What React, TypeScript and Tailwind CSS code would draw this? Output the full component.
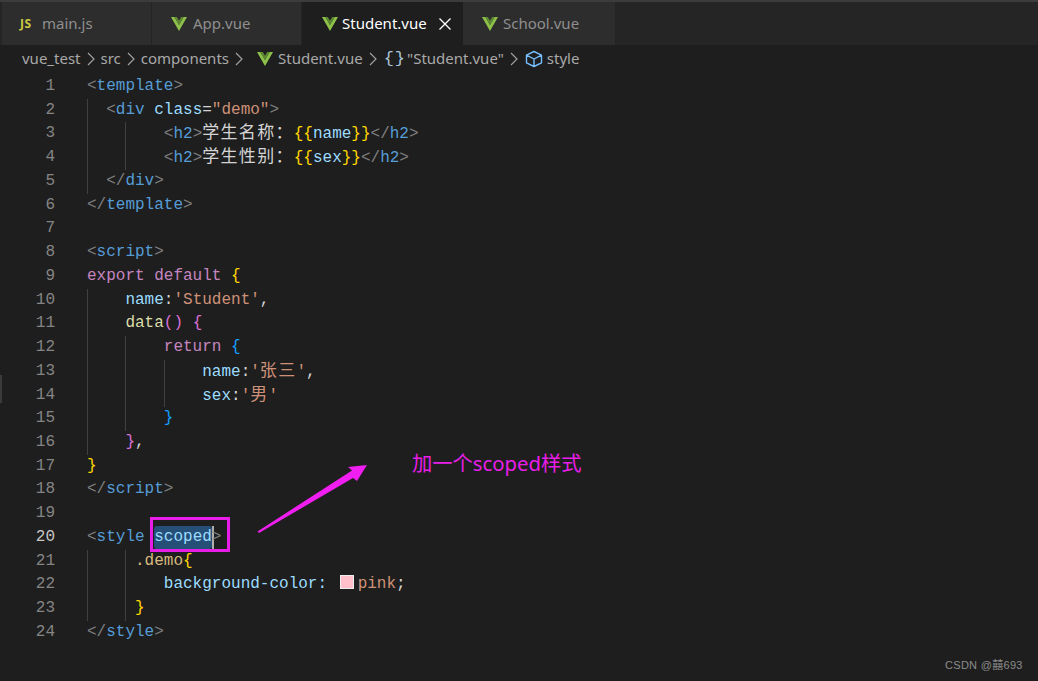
import React from "react";

const T = ({ c, children }: { c: string; children: React.ReactNode }) => <span className={c}>{children}</span>;
const G = "text-[#808080]";
const B = "text-[#569cd6]";
const A = "text-[#9cdcfe]";
const S = "text-[#ce9178]";
const K = "text-[#c586c0]";
const Y = "text-[#ffd700]";
const P = "text-[#da70d6]";
const L = "text-[#179fff]";
const W = "text-[#d4d4d4]";
const Cjk = ({ c, children }: { c: string; children: React.ReactNode }) => (
  <span className={`${c} text-[17px] leading-none tracking-[1.3px] [font-family:'Noto_Sans_CJK_SC',sans-serif]`}>{children}</span>
);

const sp = (n: number) => " ".repeat(n);

const lines: { g: number[]; n: React.ReactNode }[] = [
  { g: [], n: <><T c={G}>&lt;</T><T c={B}>template</T><T c={G}>&gt;</T></> },
  { g: [0], n: <>{sp(2)}<T c={G}>&lt;</T><T c={B}>div</T> <T c={A}>class</T><T c={W}>=</T><T c={S}>"demo"</T><T c={G}>&gt;</T></> },
  { g: [0, 1], n: <>{sp(8)}<T c={G}>&lt;</T><T c={B}>h2</T><T c={G}>&gt;</T><Cjk c={W}>学生名称：</Cjk><T c={Y}>{"{{"}</T><T c={A}>name</T><T c={Y}>{"}}"}</T><T c={G}>&lt;/</T><T c={B}>h2</T><T c={G}>&gt;</T></> },
  { g: [0, 1], n: <>{sp(8)}<T c={G}>&lt;</T><T c={B}>h2</T><T c={G}>&gt;</T><Cjk c={W}>学生性别：</Cjk><T c={Y}>{"{{"}</T><T c={A}>sex</T><T c={Y}>{"}}"}</T><T c={G}>&lt;/</T><T c={B}>h2</T><T c={G}>&gt;</T></> },
  { g: [0], n: <>{sp(2)}<T c={G}>&lt;/</T><T c={B}>div</T><T c={G}>&gt;</T></> },
  { g: [], n: <><T c={G}>&lt;/</T><T c={B}>template</T><T c={G}>&gt;</T></> },
  { g: [], n: null },
  { g: [], n: <><T c={G}>&lt;</T><T c={B}>script</T><T c={G}>&gt;</T></> },
  { g: [], n: <><T c={K}>export default</T> <T c={Y}>{"{"}</T></> },
  { g: [0], n: <>{sp(4)}<T c={A}>name</T><T c={W}>:</T><T c={S}>'Student'</T><T c={W}>,</T></> },
  { g: [0], n: <>{sp(4)}<T c="text-[#dcdcaa]">data</T><T c={P}>()</T> <T c={P}>{"{"}</T></> },
  { g: [0, 1], n: <>{sp(8)}<T c={K}>return</T> <T c={L}>{"{"}</T></> },
  { g: [0, 1, 2], n: <>{sp(12)}<T c={A}>name</T><T c={W}>:</T><T c={S}>'</T><Cjk c={S}>张三</Cjk><T c={S}>'</T><T c={W}>,</T></> },
  { g: [0, 1, 2], n: <>{sp(12)}<T c={A}>sex</T><T c={W}>:</T><T c={S}>'</T><Cjk c={S}>男</Cjk><T c={S}>'</T></> },
  { g: [0, 1], n: <>{sp(8)}<T c={L}>{"}"}</T></> },
  { g: [0], n: <>{sp(4)}<T c={P}>{"}"}</T><T c={W}>,</T></> },
  { g: [], n: <T c={Y}>{"}"}</T> },
  { g: [], n: <><T c={G}>&lt;/</T><T c={B}>script</T><T c={G}>&gt;</T></> },
  { g: [], n: null },
  {
    g: [],
    n: (
      <>
        <T c={G}>&lt;</T><T c={B}>style</T>{" "}
        <span className="inline-block h-[23px] leading-[23px] text-[#9cdcfe] bg-[#264f78] rounded-[3px] align-top">scoped</span>
        <span className="inline-block w-[2px] h-[23px] -mr-[2px] align-top bg-[#aeafad]" />
        <T c={G}>&gt;</T>
      </>
    ),
  },
  { g: [0, 1], n: <>{sp(5)}<T c="text-[#d7ba7d]">.demo</T><T c={Y}>{"{"}</T></> },
  {
    g: [0, 1],
    n: (
      <>
        {sp(8)}<T c={A}>background-color:</T>{" "}
        <span className="inline-block w-[14px] h-[14px] ml-[3px] mr-[4px] bg-[#ffc0cb] border border-[#eeeeee] align-[-1px]" />
        <T c={S}>pink</T><T c={W}>;</T>
      </>
    ),
  },
  { g: [0, 1], n: <>{sp(5)}<T c={Y}>{"}"}</T></> },
  { g: [], n: <><T c={G}>&lt;/</T><T c={B}>style</T><T c={G}>&gt;</T></> },
];

const Vue = ({ className = "" }: { className?: string }) => (
  <svg viewBox="0 0 16 14" className={`w-[16px] h-[14px] shrink-0 ${className}`}>
    <polygon points="0,0 3.4,0 8,8 12.6,0 16,0 8,14" fill="#8dc149" />
    <polygon points="3.4,0 5.8,0 8,3.8 10.2,0 12.6,0 8,8" fill="#5f8a33" />
  </svg>
);

const Chev = () => (
  <svg viewBox="0 0 8 14" className="w-[8px] h-[14px] shrink-0 mx-[6px]" fill="none" stroke="#a0a0a0" strokeWidth="1.2">
    <path d="M1 1l6 6-6 6" />
  </svg>
);

const Tab = ({
  w,
  pl,
  active,
  icon,
  label,
  children,
}: {
  w: string;
  pl: string;
  active?: boolean;
  icon: React.ReactNode;
  label: string;
  children?: React.ReactNode;
}) => (
  <div className={`${w} ${pl} ${active ? "bg-[#1e1e1e] text-white" : "bg-[#2d2d2d] text-[#8f8f8f] border-r border-[#252526]"} flex items-center h-full`}>
    {icon}
    <span>{label}</span>
    {children}
  </div>
);

export default function App() {
  return (
    <div className="relative w-[1038px] h-[681px] overflow-hidden bg-[#1e1e1e] flex flex-col [font-family:'Noto_Sans',sans-serif]">
      <div className="h-[2px] bg-[#3c3c3c]" />
      <div className="h-[43px] flex bg-[#252526] pl-[2px] text-[15px]">
        <Tab
          w="w-[150px]"
          pl="pl-[18px]"
          label="main.js"
          icon={<span className="w-[22px] text-[12px] font-bold text-[#cbcb41] tracking-[0.5px]">JS</span>}
        />
        <Tab w="w-[150px]" pl="pl-[19px]" label="App.vue" icon={<Vue className="mr-[6px]" />} />
        <Tab w="w-[161px]" pl="pl-[20px]" active label="Student.vue" icon={<Vue className="mr-[4px]" />}>
          <svg viewBox="0 0 12 12" className="w-[12px] h-[12px] ml-[12px]" stroke="#ffffff" strokeWidth="1.3" fill="none">
            <path d="M0.5 0.5l11 11M11.5 0.5l-11 11" />
          </svg>
        </Tab>
        <Tab w="w-[153px]" pl="pl-[19px]" label="School.vue" icon={<Vue className="mr-[5px]" />} />
      </div>
      <div className="h-[27px] shrink-0 flex items-center pl-[22px] text-[15px] text-[#a9a9a9]">
        <span>vue_test</span>
        <Chev />
        <span>src</span>
        <Chev />
        <span>components</span>
        <Chev />
        <Vue className="ml-[8px] mr-[5px]" />
        <span>Student.vue</span>
        <Chev />
        <span className="text-[17px] text-[#a9c4d8] ml-[1px] tracking-[1px] [font-family:'Liberation_Mono',monospace]">{"{}"}</span>
        <span className="ml-[1px]">"Student.vue"</span>
        <Chev />
        <svg viewBox="0 0 18 18" className="w-[18px] h-[18px] ml-[1px] mr-[4px]" fill="none" stroke="#75beff" strokeWidth="1.4" strokeLinejoin="round">
          <path d="M9 1.5l7.5 3.7v7.6L9 16.5l-7.5-3.7V5.2zM1.5 5.2L9 9l7.5-3.8M9 9v7.5" />
        </svg>
        <span>style</span>
      </div>
      <div className="flex-1 pt-[3px] text-[16px] [font-family:'Liberation_Mono','Noto_Sans_CJK_SC',monospace]">
        {lines.map((l, i) => (
          <div key={i} className="relative flex h-[23.74px] leading-[23.74px] whitespace-pre">
            <div className={`w-[55px] shrink-0 text-right ${i === 19 ? "text-[#c6c6c6]" : "text-[#858585]"}`}>{i + 1}</div>
            <div className="ml-[32px] relative">
              {l.n}
            </div>
            {l.g.map((g) => (
              <span
                key={g}
                className={`absolute top-0 bottom-0 w-px bg-[#404040] ${g === 0 ? "left-[87px]" : g === 1 ? "left-[125px]" : "left-[164px]"}`}
              />
            ))}
          </div>
        ))}
      </div>
      <div className="absolute left-0 top-[375px] w-[2px] h-[28px] bg-[#3a3a3a]" />
      <div className="absolute left-[150px] top-[517px] w-[80px] h-[35px] border-[3px] border-[#e81de8]" />
      <svg viewBox="0 0 1038 681" className="absolute inset-0 w-[1038px] h-[681px] pointer-events-none">
        <polygon points="257.5,531.5 352,470.5 348,467 367,465 357,481 353,478 259,533" fill="#f01ef0" />
      </svg>
      <div className="absolute left-[412px] top-[449px] text-[20.3px] leading-[28px] text-[#e81de8] [font-family:'Noto_Sans','Noto_Sans_CJK_SC',sans-serif]">
        加一个scoped样式
      </div>
      <div className="absolute left-[945px] top-[657px] text-[11px] tracking-[0.3px] leading-[16px] text-[#8c8c8c] [font-family:'Liberation_Sans','Noto_Sans_CJK_SC',sans-serif]">
        CSDN @囍693
      </div>
    </div>
  );
}
